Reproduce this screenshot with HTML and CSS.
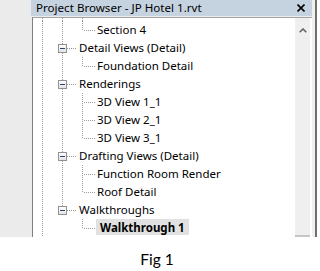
FILE: index.html
```html
<!DOCTYPE html>
<html lang="en">
<head>
  <meta charset="UTF-8">
  <meta name="viewport" content="width=device-width, initial-scale=1.0">
  <title>Project Browser</title>
  <link rel="stylesheet" href="styles.css">
</head>
<body>
  <div class="shot">
    <div class="backdrop"></div>

    <div class="browser">
      <div class="titlebar">
        <span class="title">Project Browser - JP Hotel 1.rvt</span>
        <svg class="close" width="8" height="8" viewBox="0 0 8 8">
          <path d="M0.5 0.5 L7.5 7.5 M7.5 0.5 L0.5 7.5" stroke="#000" stroke-width="1.6" fill="none"/>
        </svg>
      </div>

      <div class="pane">
        <div class="inner">
          <div class="tree">
            <!-- tail of the row scrolled above -->
            <div class="row stub">
              <span class="cell pipe"></span><span class="cell pipe"></span><span class="cell leaf pipe"></span>
            </div>

            <div class="row">
              <span class="cell pipe"></span><span class="cell pipe"></span><span class="cell leaf elbow"></span>
              <span class="label">Section 4</span>
            </div>

            <div class="row">
              <span class="cell pipe"></span><span class="cell toggle tee"><span class="box"></span></span>
              <span class="label">Detail Views (Detail)</span>
            </div>
            <div class="row">
              <span class="cell pipe"></span><span class="cell pipe"></span><span class="cell leaf elbow"></span>
              <span class="label">Foundation Detail</span>
            </div>

            <div class="row">
              <span class="cell pipe"></span><span class="cell toggle tee"><span class="box"></span></span>
              <span class="label">Renderings</span>
            </div>
            <div class="row">
              <span class="cell pipe"></span><span class="cell pipe"></span><span class="cell leaf tee"></span>
              <span class="label">3D View 1_1</span>
            </div>
            <div class="row">
              <span class="cell pipe"></span><span class="cell pipe"></span><span class="cell leaf tee"></span>
              <span class="label">3D View 2_1</span>
            </div>
            <div class="row">
              <span class="cell pipe"></span><span class="cell pipe"></span><span class="cell leaf elbow"></span>
              <span class="label">3D View 3_1</span>
            </div>

            <div class="row">
              <span class="cell pipe"></span><span class="cell toggle tee"><span class="box"></span></span>
              <span class="label">Drafting Views (Detail)</span>
            </div>
            <div class="row">
              <span class="cell pipe"></span><span class="cell pipe"></span><span class="cell leaf tee"></span>
              <span class="label">Function Room Render</span>
            </div>
            <div class="row">
              <span class="cell pipe"></span><span class="cell pipe"></span><span class="cell leaf elbow"></span>
              <span class="label">Roof Detail</span>
            </div>

            <div class="row">
              <span class="cell pipe"></span><span class="cell toggle elbow"><span class="box"></span></span>
              <span class="label">Walkthroughs</span>
            </div>
            <div class="row">
              <span class="cell pipe"></span><span class="cell"></span><span class="cell leaf elbow"></span>
              <span class="label selected">Walkthrough 1</span>
            </div>
          </div>

          <div class="scroll">
            <svg class="arrow" width="8" height="5" viewBox="0 0 8 5">
              <path d="M0.7 4.3 L4 1 L7.3 4.3" stroke="#606060" stroke-width="1.5" fill="none"/>
            </svg>
          </div>
        </div>
      </div>
    </div>

    <div class="edge"></div>
  </div>

  <p class="caption">Fig 1</p>
</body>
</html>
```

FILE: styles.css
```css
body {
  margin: 0;
  background: #fff;
  font-family: "Noto Sans", "Open Sans", sans-serif;
  color: #000;
}
.shot {
  display: flex;
  height: 237px;
}
.backdrop {
  width: 31px;
  flex: none;
  background-color: #e6e6e6;
  background-image: radial-gradient(circle, #efefef 0.6px, transparent 0.8px);
  background-size: 2px 2px;
}
.browser {
  width: 281px;
  flex: none;
  display: flex;
  flex-direction: column;
}
.edge {
  width: 3px;
  flex: none;
  background: #f0f0f0;
  border-right: 2px solid #6f6f6f;
}

/* title bar */
.titlebar {
  height: 16px;
  display: flex;
  align-items: center;
  justify-content: space-between;
  padding: 0 7px 0 5px;
  background: #c5d2df;
}
.title {
  font-size: 11.6px;
  line-height: 16px;
}
.close {
  display: block;
}

/* pane */
.pane {
  flex: 1;
  display: flex;
  border-left: 1px solid #ececec;
  border-top: 1px solid #ececec;
}
.inner {
  flex: 1;
  display: flex;
  border-left: 1px solid #7f7f7f;
  border-top: 1px solid #a3a3a3;
  background: #fff;
}
.tree {
  flex: 1;
  padding-left: 1px;
  overflow: hidden;
}
.scroll {
  width: 15px;
  flex: none;
  margin-right: 2px;
  background: #efefef;
  border-bottom: 2px solid #c6c6c6;
  display: flex;
  justify-content: center;
  padding-top: 10px;
  box-sizing: border-box;
}
.arrow {
  display: block;
}

/* tree rows */
.row {
  display: flex;
  align-items: center;
  height: 18px;
  font-size: 11.5px;
}
.row.stub {
  height: 3px;
}
.cell {
  width: 20px;
  height: 100%;
  flex: none;
  background-repeat: no-repeat;
}
.cell.leaf {
  width: 22px;
}
.cell.toggle {
  width: 24px;
  display: flex;
  align-items: center;
}

/* dotted connector lines */
.pipe,
.tee,
.elbow {
  --vdots: repeating-linear-gradient(to bottom, #9c9c9c 0 1px, transparent 1px 2px);
  --hdots: repeating-linear-gradient(to right, #9c9c9c 0 1px, transparent 1px 2px);
}
.pipe {
  background-image: var(--vdots);
  background-size: 1px 100%;
  background-position: 8px 0;
}
.leaf.tee {
  background-image: var(--vdots), var(--hdots);
  background-size: 1px 100%, 12px 1px;
  background-position: 8px 0, 10px 9px;
}
.leaf.elbow {
  background-image: var(--vdots), var(--hdots);
  background-size: 1px 10px, 12px 1px;
  background-position: 8px 0, 10px 9px;
}
.toggle.tee {
  background-image: var(--vdots), var(--hdots);
  background-size: 1px 100%, 10px 1px;
  background-position: 8px 0, 13px 9px;
}
.toggle.elbow {
  background-image: var(--vdots), var(--hdots);
  background-size: 1px 5px, 10px 1px;
  background-position: 8px 0, 13px 9px;
}
.box {
  width: 9px;
  height: 9px;
  margin-left: 4px;
  box-sizing: border-box;
  border: 1px solid #929292;
  background: linear-gradient(#fff, #e4e4e4);
  display: flex;
  align-items: center;
  justify-content: center;
}
.box::before {
  content: "";
  width: 5px;
  height: 1px;
  background: #2c4370;
}
.label {
  padding: 0 1px;
  line-height: 16px;
  white-space: nowrap;
}
.label.selected {
  align-self: flex-start;
  height: 16px;
  padding: 1px 4px 0;
  box-sizing: border-box;
  line-height: 15px;
  font-weight: bold;
  background: #e1e1e1;
}

.caption {
  margin: 13px 0 0;
  padding-right: 6px;
  text-align: center;
  font-family: Lato, "Open Sans", sans-serif;
  font-size: 15.5px;
  line-height: 18px;
}
```
